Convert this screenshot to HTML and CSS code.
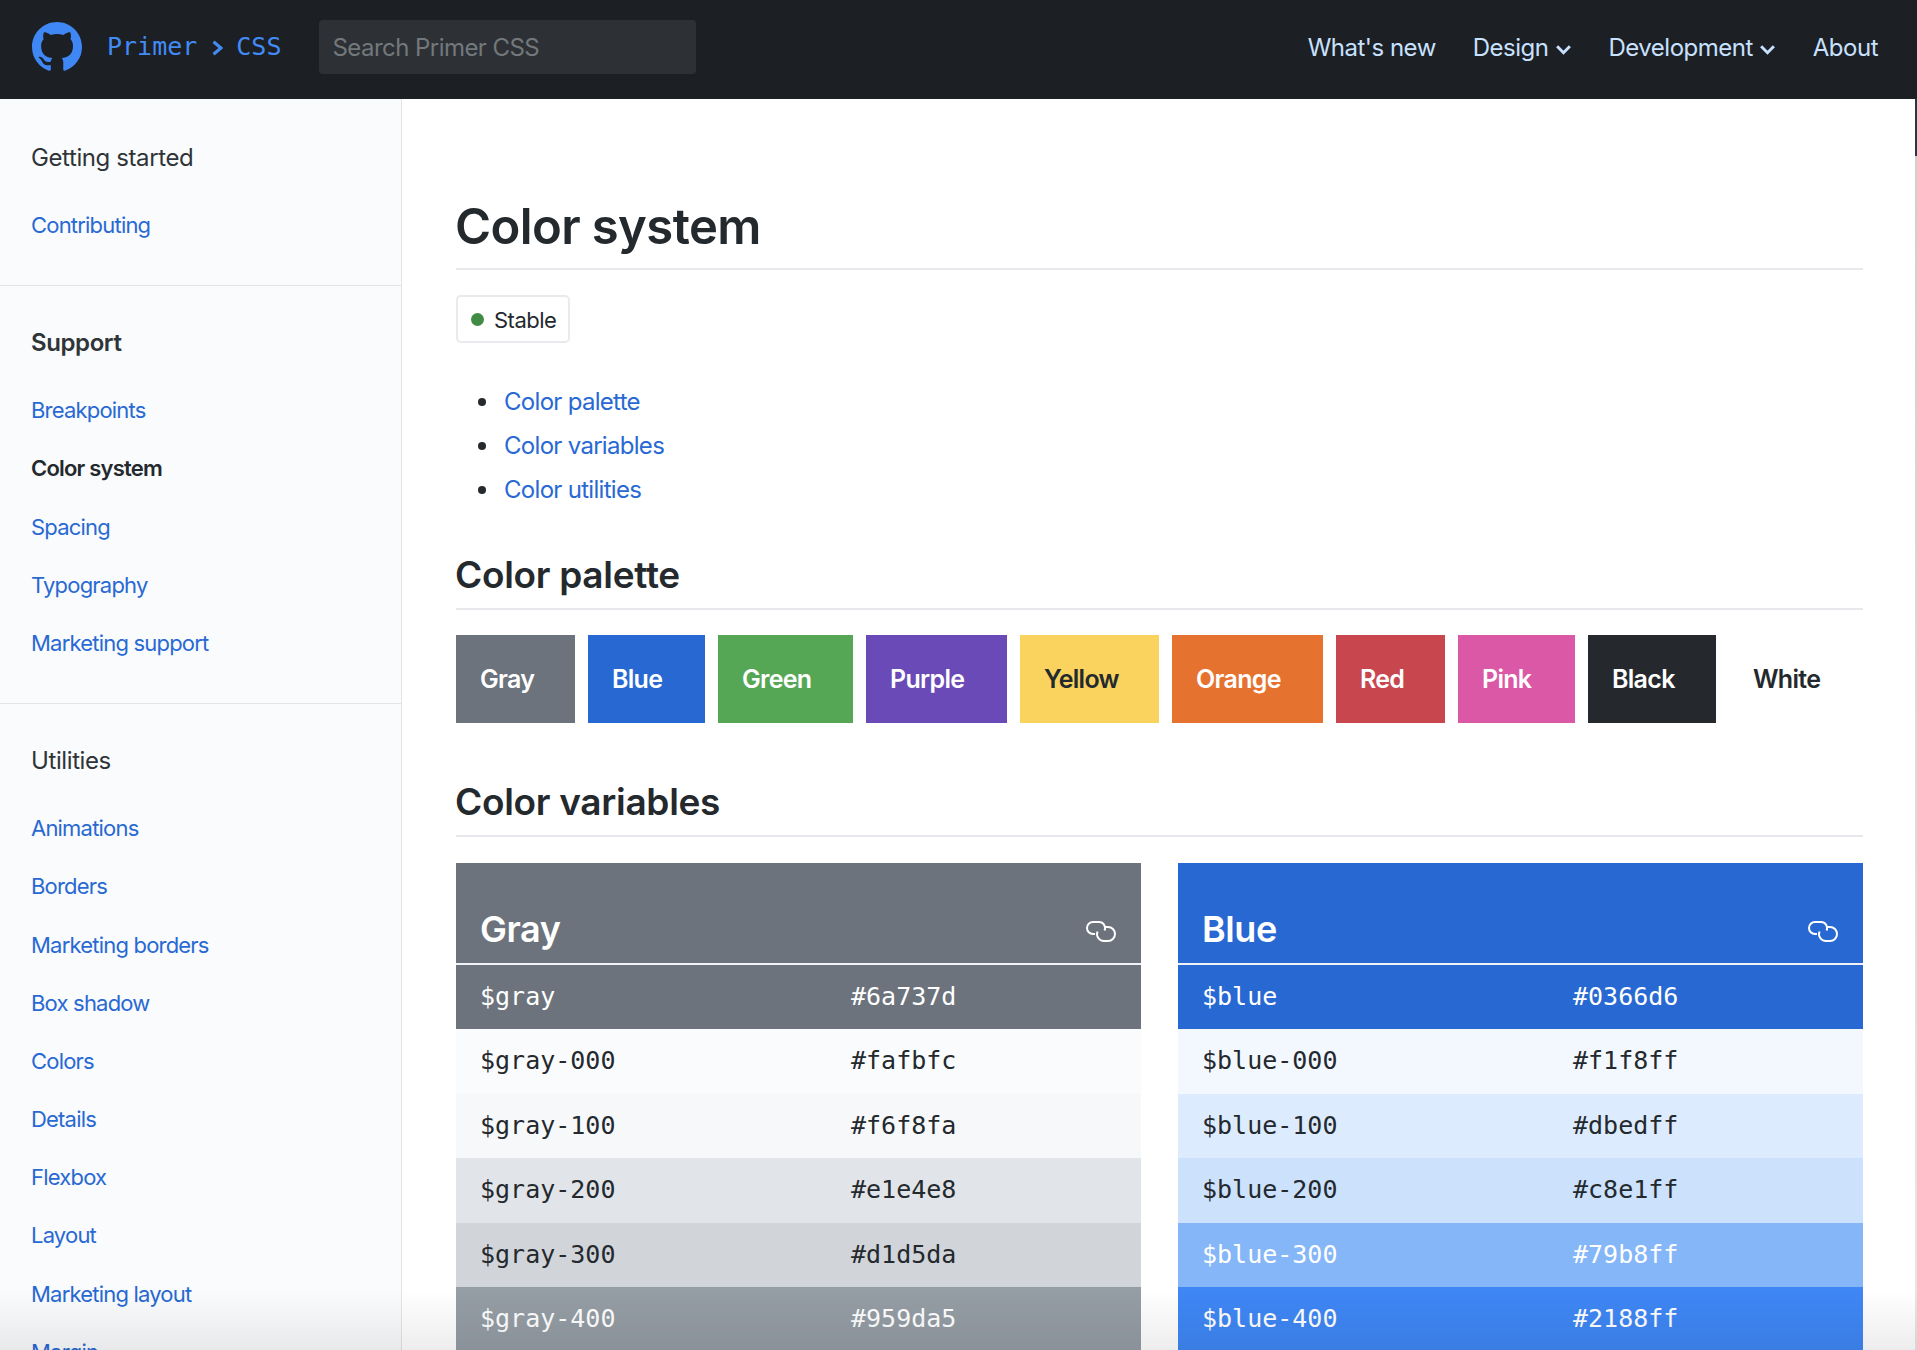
FILE: index.html
```html
<!DOCTYPE html>
<html lang="en">
<head>
<meta charset="utf-8">
<title>Color system | Primer CSS</title>
<link rel="stylesheet" href="styles.css">
</head>
<body>
<header class="topbar">
  <a class="brand" href="#">
    <svg class="logo" viewBox="0 0 16 16" aria-hidden="true"><path fill-rule="evenodd" d="M8 0C3.58 0 0 3.58 0 8c0 3.54 2.29 6.53 5.47 7.59.4.07.55-.17.55-.38 0-.19-.01-.82-.01-1.49-2.01.37-2.53-.49-2.69-.94-.09-.23-.48-.94-.82-1.13-.28-.15-.68-.52-.01-.53.63-.01 1.08.58 1.23.82.72 1.21 1.87.87 2.33.66.07-.52.28-.87.51-1.07-1.78-.2-3.64-.89-3.64-3.95 0-.87.31-1.59.82-2.15-.08-.2-.36-1.02.08-2.12 0 0 .67-.21 2.2.82.64-.18 1.32-.27 2-.27.68 0 1.36.09 2 .27 1.53-1.04 2.2-.82 2.2-.82.44 1.1.16 1.92.08 2.12.51.56.82 1.27.82 2.15 0 3.07-1.87 3.75-3.65 3.95.29.25.54.73.54 1.48 0 1.07-.01 1.93-.01 2.2 0 .21.15.46.55.38A8.013 8.013 0 0016 8c0-4.42-3.58-8-8-8z"/></svg>
    <span class="brand-text">Primer</span>
    <svg class="crumb" viewBox="0 0 12 16" aria-hidden="true"><path d="M2.500 2.500 9 8l-6.500 5.500"/></svg>
    <span class="brand-text">CSS</span>
  </a>
  <div class="search">Search Primer CSS</div>
  <nav class="topnav">
    <a href="#">What's new</a>
    <a href="#">Design<svg class="chev" viewBox="0 0 16 10" aria-hidden="true"><path d="M2 2l6 6 6-6"/></svg></a>
    <a href="#">Development<svg class="chev" viewBox="0 0 16 10" aria-hidden="true"><path d="M2 2l6 6 6-6"/></svg></a>
    <a href="#">About</a>
  </nav>
</header>

<div class="shell">
  <aside class="sidebar">
    <section class="side-group first">
      <div class="side-head">Getting started</div>
      <ul class="side-list">
        <li><a href="#">Contributing</a></li>
      </ul>
    </section>
    <section class="side-group">
      <div class="side-head strong">Support</div>
      <ul class="side-list">
        <li><a href="#">Breakpoints</a></li>
        <li><a class="current" href="#">Color system</a></li>
        <li><a href="#">Spacing</a></li>
        <li><a href="#">Typography</a></li>
        <li><a href="#">Marketing support</a></li>
      </ul>
    </section>
    <section class="side-group">
      <div class="side-head">Utilities</div>
      <ul class="side-list">
        <li><a href="#">Animations</a></li>
        <li><a href="#">Borders</a></li>
        <li><a href="#">Marketing borders</a></li>
        <li><a href="#">Box shadow</a></li>
        <li><a href="#">Colors</a></li>
        <li><a href="#">Details</a></li>
        <li><a href="#">Flexbox</a></li>
        <li><a href="#">Layout</a></li>
        <li><a href="#">Marketing layout</a></li>
        <li><a href="#">Margin</a></li>
      </ul>
    </section>
  </aside>

  <main class="content">
    <h1 class="title">Color system</h1>
    <div class="badge"><span class="dot"></span>Stable</div>
    <ul class="toc">
      <li><a href="#">Color palette</a></li>
      <li><a href="#">Color variables</a></li>
      <li><a href="#">Color utilities</a></li>
    </ul>

    <h2 class="section palette-title">Color palette</h2>
    <div class="palette">
      <div class="swatch bg-gray">Gray</div>
      <div class="swatch bg-blue">Blue</div>
      <div class="swatch bg-green">Green</div>
      <div class="swatch bg-purple">Purple</div>
      <div class="swatch bg-yellow dark">Yellow</div>
      <div class="swatch bg-orange">Orange</div>
      <div class="swatch bg-red">Red</div>
      <div class="swatch bg-pink">Pink</div>
      <div class="swatch bg-black">Black</div>
      <div class="swatch dark">White</div>
    </div>

    <h2 class="section vars-title">Color variables</h2>
    <div class="tables">
      <section class="ctable">
        <div class="chead bg-gray">
          <span class="cname">Gray</span>
          <svg class="linkicon" viewBox="0 0 32 24" aria-hidden="true"><path d="M10 15H8A6 6 0 0 1 8 3h6a6 6 0 0 1 5.500 8.500"/><path d="M19 8h4a7 7 0 0 1 0 14h-4a7 7 0 0 1-6.500-9.500"/></svg>
        </div>
        <div class="crow bg-gray"><span>$gray</span><span>#6a737d</span></div>
        <div class="crow dark g0"><span>$gray-000</span><span>#fafbfc</span></div>
        <div class="crow dark g1"><span>$gray-100</span><span>#f6f8fa</span></div>
        <div class="crow dark g2"><span>$gray-200</span><span>#e1e4e8</span></div>
        <div class="crow dark g3"><span>$gray-300</span><span>#d1d5da</span></div>
        <div class="crow g4"><span>$gray-400</span><span>#959da5</span></div>
      </section>
      <section class="ctable">
        <div class="chead bg-blue">
          <span class="cname">Blue</span>
          <svg class="linkicon" viewBox="0 0 32 24" aria-hidden="true"><path d="M10 15H8A6 6 0 0 1 8 3h6a6 6 0 0 1 5.500 8.500"/><path d="M19 8h4a7 7 0 0 1 0 14h-4a7 7 0 0 1-6.500-9.500"/></svg>
        </div>
        <div class="crow bg-blue"><span>$blue</span><span>#0366d6</span></div>
        <div class="crow dark b0"><span>$blue-000</span><span>#f1f8ff</span></div>
        <div class="crow dark b1"><span>$blue-100</span><span>#dbedff</span></div>
        <div class="crow dark b2"><span>$blue-200</span><span>#c8e1ff</span></div>
        <div class="crow b3"><span>$blue-300</span><span>#79b8ff</span></div>
        <div class="crow b4"><span>$blue-400</span><span>#2188ff</span></div>
      </section>
    </div>
  </main>
</div>

<div class="edge"></div>
<div class="fade"></div>
</body>
</html>
```
FILE: styles.css
```css
* { box-sizing: border-box; }
html, body { margin: 0; height: 1350px; overflow: hidden; background: #fff; }
body { font-family: Inter, "Liberation Sans", sans-serif; color: #24292e; }
a { color: #2869d3; text-decoration: none; }
ul { list-style: none; margin: 0; padding: 0; }

.topbar { display: flex; align-items: center; height: 99px; padding-left: 32px; background: #1c1f23; }
.brand { display: flex; align-items: center; margin-top: -8px; }
.logo { width: 50px; height: 50px; fill: #3f87f5; margin-right: 25px; margin-top: 2px; }
.brand-text { font-family: "DejaVu Sans Mono", monospace; font-size: 25px; line-height: 30px; color: #428bf5; padding-top: 2px; }
.crumb { width: 15px; height: 18px; margin: 4px 11px 0 13px; fill: none; stroke: #428bf5; stroke-width: 2.800; }
.search { width: 377px; height: 54px; margin: -6px 0 0 38px; padding-left: 13px; border-radius: 4px; background: #2d3135; color: #73787c; font-size: 24px; line-height: 56px; letter-spacing: -0.55px; }
.topnav { display: flex; align-items: center; gap: 37px; margin-left: auto; margin-right: 39px; margin-top: -4px; }
.topnav a { display: flex; align-items: center; color: #c8e1ff; font-size: 24px; line-height: 32px; letter-spacing: -0.5px; }
.chev { width: 17px; height: 11px; margin: 3px 0 0 6px; fill: none; stroke: #c8e1ff; stroke-width: 2.800; }

.shell { display: flex; height: 1251px; }
.sidebar { flex: 0 0 402px; background: #fafbfc; border-right: 1px solid #e1e4e8; overflow: hidden; }
.side-group { padding: 28px 0 31px 31px; border-bottom: 1px solid #e1e4e8; }
.side-group.first { padding-top: 30px; }
.side-head { font-size: 24px; line-height: 58px; letter-spacing: -0.4px; margin-bottom: 9px; color: #2f3439; }
.side-head.strong { font-weight: 600; }
.side-list li { height: 58.200px; font-size: 22px; line-height: 58px; letter-spacing: -0.8px; }
.side-list .current { color: #24292e; font-weight: 600; }

.content { flex: 1; padding: 0 54px; }
.title { margin: 0; height: 171px; padding-top: 128px; border-bottom: 2px solid #e6e8eb; font-size: 49px; font-weight: 600; line-height: 0; letter-spacing: -0.6px; text-indent: -1px; color: #24292e; }
.badge { display: inline-flex; align-items: center; height: 48px; margin-top: 25px; padding: 2px 12px 0 13px; border: 2px solid #e8eaed; border-radius: 5px; font-size: 22px; letter-spacing: -0.5px; }
.dot { width: 13px; height: 13px; margin: -2px 10px 0 0; border-radius: 50%; background: #418c45; }
.toc { margin-top: 37px; }
.toc li { display: flex; align-items: center; height: 44px; font-size: 24px; line-height: 44px; letter-spacing: -0.7px; }
.toc li::before { content: ""; width: 8px; height: 8px; margin: 0 18px 0 22px; border-radius: 50%; background: #24292e; }
.section { margin: 0; border-bottom: 2px solid #e6e8eb; font-size: 37px; font-weight: 600; letter-spacing: -0.3px; line-height: 44px; text-indent: -1px; color: #24292e; }
.palette-title { margin-top: 41px; padding-bottom: 11px; }
.vars-title { margin-top: 57px; padding-bottom: 11px; }

.palette { display: grid; grid-template-columns: 119px 117px 135px 141px 139px 151px 109px 117px 128px 1fr; gap: 13px; margin-top: 25px; }
.swatch { height: 88px; padding-left: 24px; color: #fff; font-size: 25px; font-weight: 600; line-height: 88px; letter-spacing: -0.7px; }
.swatch.dark { color: #24292e; }
.bg-gray { background: #6c737c; color: #fff; }
.bg-blue { background: #2868d2; color: #fff; }
.bg-green { background: #55a755; }
.bg-purple { background: #6a4ab6; }
.bg-yellow { background: #fad35e; }
.bg-orange { background: #e6722f; }
.bg-red { background: #c8474f; }
.bg-pink { background: #db58a6; }
.bg-black { background: #25292d; }

.tables { display: grid; grid-template-columns: 685px 685px; justify-content: space-between; margin-top: 26px; }
.chead { display: flex; align-items: flex-end; justify-content: space-between; height: 102px; padding: 0 24px 10px 24px; border-bottom: 2px solid #f0f2f5; }
.cname { font-size: 36px; font-weight: 600; line-height: 48px; letter-spacing: -0.4px; }
.linkicon { width: 32px; height: 24px; margin-bottom: 10px; fill: none; stroke: #fff; stroke-width: 2; }
.crow { display: grid; grid-template-columns: 371px 1fr; height: 64.400px; padding-left: 24px; font-family: "DejaVu Sans Mono", monospace; font-size: 25px; line-height: 64.400px; color: #fff; }
.crow.dark { color: #24292e; }
.g0 { background: #fafbfc; }
.g1 { background: #f6f8fa; }
.g2 { background: #e1e4e8; }
.g3 { background: #d1d5da; }
.g4 { background: #959da5; }
.b0 { background: #f3f8ff; }
.b1 { background: #dcecfe; }
.b2 { background: #cbe1fc; }
.b3 { background: #85b6f8; }
.b4 { background: #3f87f5; }

.edge { position: fixed; top: 99px; right: 0; width: 2px; height: 1251px; background: linear-gradient(#2b3547 0, #2b3547 57px, #cfcfcf 57px, #e6e6e6 100%); }
.fade { position: fixed; left: 0; right: 0; bottom: 0; height: 60px; background: linear-gradient(rgba(0,0,0,0), rgba(0,0,0,0.07)); pointer-events: none; }
```
